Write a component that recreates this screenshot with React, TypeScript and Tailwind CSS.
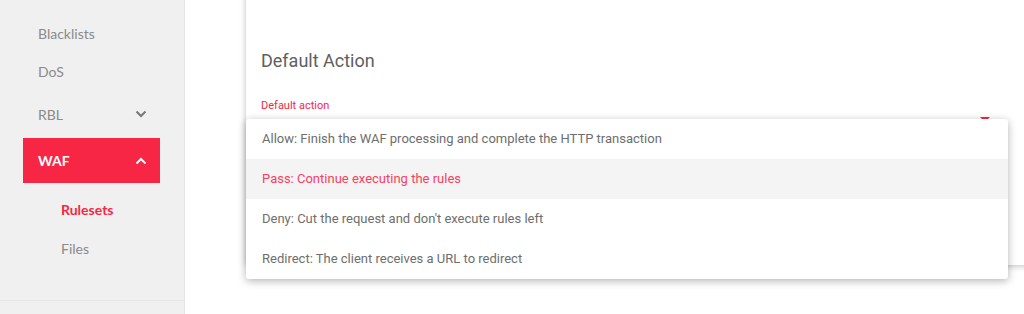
import React from "react";

const options = [
  { label: "Allow: Finish the WAF processing and complete the HTTP transaction", active: false },
  { label: "Pass: Continue executing the rules", active: true },
  { label: "Deny: Cut the request and don't execute rules left", active: false },
  { label: "Redirect: The client receives a URL to redirect", active: false },
];

function Chevron({ up }: { up?: boolean }) {
  return (
    <svg width="12" height="8" viewBox="0 0 12 8" className="block">
      <path
        d={up ? "M1.5 6.5 L6 2 L10.5 6.5" : "M1.5 1.5 L6 6 L10.5 1.5"}
        fill="none"
        stroke="currentColor"
        strokeWidth="2"
      />
    </svg>
  );
}

function Sidebar() {
  return (
    <aside className="w-[185px] shrink-0 h-full bg-[#f0f0f0] border-r border-[#e4e4e4] flex flex-col font-['Lato',sans-serif] text-[14px]">
      <div className="flex-1 pl-[23px] pr-[24px] pt-[14px]">
        <div className="h-[38px] flex items-center pl-[15px] text-[#8a8a8a]">Blacklists</div>
        <div className="h-[38px] flex items-center pl-[15px] text-[#8a8a8a]">DoS</div>
        <div className="h-[48px] flex items-center justify-between pl-[15px] pr-[13px] text-[#8a8a8a]">
          <span>RBL</span>
          <span className="text-[#777]">
            <Chevron />
          </span>
        </div>
        <div className="h-[45px] flex items-center justify-between pl-[15px] pr-[13px] bg-[#f72645] text-white font-bold">
          <span>WAF</span>
          <Chevron up />
        </div>
        <div className="h-[44px] pt-[8px] flex items-center pl-[38px] text-[#f72645] font-bold">Rulesets</div>
        <div className="h-[42px] flex items-center pl-[38px] text-[#8a8a8a]">Files</div>
      </div>
      <div className="h-[14px] border-t border-[#e6e6e6]" />
    </aside>
  );
}

export default function App() {
  return (
    <div className="w-[1024px] h-[314px] flex overflow-hidden bg-white font-['Roboto',sans-serif]">
      <Sidebar />
      <main className="flex-1 relative pl-[61px]">
        <div className="relative -mt-[20px] w-[800px] h-[285px] bg-white rounded-[3px] shadow-[0_1px_6px_rgba(0,0,0,0.25)]">
          <div className="pl-[15px] pt-[68px]">
            <h2 className="text-[18px] text-[#606060] leading-[26px]">Default Action</h2>
            <div className="mt-[25px] pr-[44px] relative">
              <div className="text-[11px] text-[#f72645] leading-[14px]">Default action</div>
              <div className="h-[22px] flex justify-end pr-[12px] pt-[4px]">
                <span className="block w-0 h-0 border-l-[5px] border-r-[5px] border-t-[5px] border-l-transparent border-r-transparent border-t-[#f72645]" />
              </div>
            </div>
          </div>
          <ul className="absolute left-0 top-[139px] w-[762px] bg-white rounded-[3px] shadow-[0_2px_8px_rgba(0,0,0,0.3)] text-[13px] z-10">
            {options.map((o) => (
              <li
                key={o.label}
                className={`h-[40px] flex items-center pl-[16px] ${o.active ? "bg-[#f4f4f4] text-[#f7415f]" : "text-[#6e6e6e]"}`}
              >
                {o.label}
              </li>
            ))}
          </ul>
        </div>
      </main>
    </div>
  );
}
